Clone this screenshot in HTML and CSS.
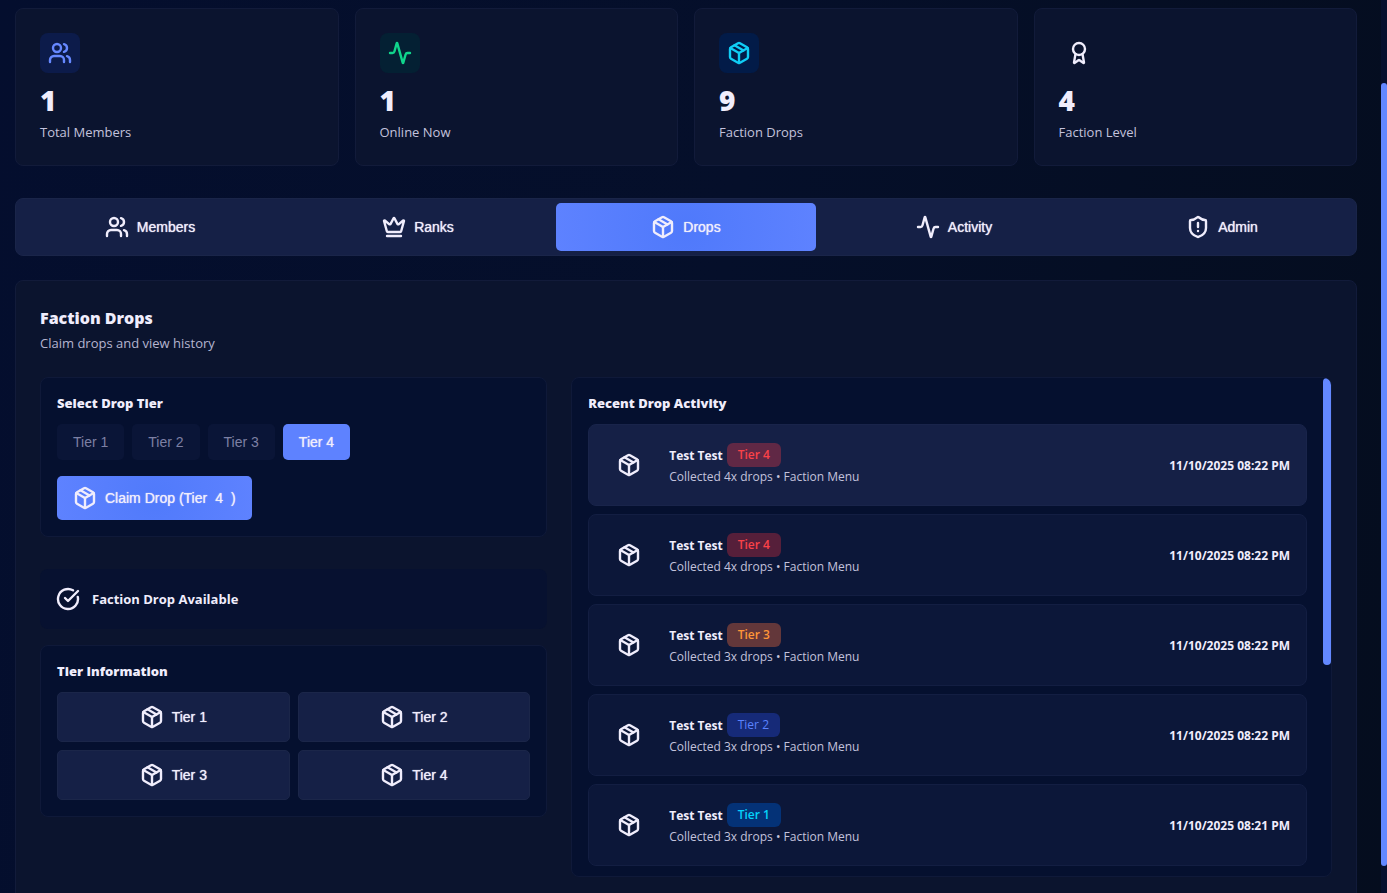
FILE: index.html
```
<!DOCTYPE html>
<html lang="en">
<head>
    <meta charset="UTF-8">
    <meta name="viewport" content="width=device-width, initial-scale=1.0">
    <title>Faction Menu</title>
    <link rel="stylesheet" href="styles.css">
</head>
<body>

<svg class="sprite" aria-hidden="true">
    <symbol id="users" viewBox="0 0 24 24">
        <path d="M16 21v-2a4 4 0 0 0-4-4H6a4 4 0 0 0-4 4v2"/>
        <circle cx="9" cy="7" r="4"/>
        <path d="M22 21v-2a4 4 0 0 0-3-3.87"/>
        <path d="M16 3.13a4 4 0 0 1 0 7.75"/>
    </symbol>
    <symbol id="activity" viewBox="0 0 24 24">
        <path d="M22 12h-2.48a2 2 0 0 0-1.93 1.46l-2.35 8.36a.25.25 0 0 1-.48 0L9.24 2.18a.25.25 0 0 0-.48 0l-2.35 8.36A2 2 0 0 1 4.49 12H2"/>
    </symbol>
    <symbol id="package" viewBox="0 0 24 24">
        <path d="M11 21.73a2 2 0 0 0 2 0l7-4A2 2 0 0 0 21 16V8a2 2 0 0 0-1-1.73l-7-4a2 2 0 0 0-2 0l-7 4A2 2 0 0 0 3 8v8a2 2 0 0 0 1 1.73z"/>
        <path d="M12 22V12"/>
        <path d="M3.3 7l8.7 5 8.7-5"/>
        <path d="M7.5 4.27l9 5.15"/>
    </symbol>
    <symbol id="award" viewBox="0 0 24 24">
        <path d="m15.477 12.89 1.515 8.526a.5.5 0 0 1-.81.47l-3.58-2.687a1 1 0 0 0-1.197 0l-3.586 2.686a.5.5 0 0 1-.81-.469l1.514-8.526"/>
        <circle cx="12" cy="8" r="6"/>
    </symbol>
    <symbol id="crown" viewBox="0 0 24 24">
        <path d="M11.562 3.266a.5.5 0 0 1 .876 0L15.39 8.87a1 1 0 0 0 1.516.294L21.183 5.5a.5.5 0 0 1 .798.519l-2.834 10.246a1 1 0 0 1-.956.734H5.81a1 1 0 0 1-.957-.734L2.02 6.02a.5.5 0 0 1 .798-.519l4.276 3.664a1 1 0 0 0 1.516-.294z"/>
        <path d="M5 21h14"/>
    </symbol>
    <symbol id="shield" viewBox="0 0 24 24">
        <path d="M20 13c0 5-3.5 7.5-7.66 8.95a1 1 0 0 1-.67-.01C7.5 20.5 4 18 4 13V6a1 1 0 0 1 1-1c2 0 4.5-1.2 6.24-2.72a1.17 1.17 0 0 1 1.52 0C14.51 3.81 17 5 19 5a1 1 0 0 1 1 1z"/>
        <path d="M12 8v4"/>
        <path d="M12 16h.01"/>
    </symbol>
    <symbol id="check" viewBox="0 0 24 24">
        <path d="M21.801 10A10 10 0 1 1 17 3.335"/>
        <path d="m9 11 3 3L22 4"/>
    </symbol>
</svg>

<main class="page">
    <section class="stats">
        <div class="stat">
            <div class="stat-icon blue"><svg class="icon"><use href="#users"/></svg></div>
            <div class="stat-value">1</div>
            <div class="stat-label">Total Members</div>
        </div>
        <div class="stat">
            <div class="stat-icon green"><svg class="icon"><use href="#activity"/></svg></div>
            <div class="stat-value">1</div>
            <div class="stat-label">Online Now</div>
        </div>
        <div class="stat">
            <div class="stat-icon cyan"><svg class="icon"><use href="#package"/></svg></div>
            <div class="stat-value">9</div>
            <div class="stat-label">Faction Drops</div>
        </div>
        <div class="stat">
            <div class="stat-icon"><svg class="icon"><use href="#award"/></svg></div>
            <div class="stat-value">4</div>
            <div class="stat-label">Faction Level</div>
        </div>
    </section>

    <nav class="tabs">
        <button class="tab"><svg class="icon"><use href="#users"/></svg>Members</button>
        <button class="tab"><svg class="icon"><use href="#crown"/></svg>Ranks</button>
        <button class="tab active"><svg class="icon"><use href="#package"/></svg>Drops</button>
        <button class="tab"><svg class="icon"><use href="#activity"/></svg>Activity</button>
        <button class="tab"><svg class="icon"><use href="#shield"/></svg>Admin</button>
    </nav>

    <section class="panel">
        <h2>Faction Drops</h2>
        <p class="subtitle">Claim drops and view history</p>

        <div class="columns">
            <div class="left">
                <div class="card select-card">
                    <h3>Select Drop Tier</h3>
                    <div class="tier-buttons">
                        <button class="tier-button">Tier 1</button>
                        <button class="tier-button">Tier 2</button>
                        <button class="tier-button">Tier 3</button>
                        <button class="tier-button selected">Tier 4</button>
                    </div>
                    <button class="claim-button"><svg class="icon"><use href="#package"/></svg><span>Claim Drop (Tier</span><span>4</span><span>)</span></button>
                </div>

                <div class="status">
                    <svg class="icon"><use href="#check"/></svg>
                    <strong>Faction Drop Available</strong>
                </div>

                <div class="card">
                    <h3>Tier Information</h3>
                    <div class="tier-grid">
                        <button class="tier-info"><svg class="icon"><use href="#package"/></svg>Tier 1</button>
                        <button class="tier-info"><svg class="icon"><use href="#package"/></svg>Tier 2</button>
                        <button class="tier-info"><svg class="icon"><use href="#package"/></svg>Tier 3</button>
                        <button class="tier-info"><svg class="icon"><use href="#package"/></svg>Tier 4</button>
                    </div>
                </div>
            </div>

            <div class="card history">
                <div class="history-content">
                    <h3>Recent Drop Activity</h3>
                    <ul class="drops">
                        <li class="drop hovered">
                            <svg class="icon"><use href="#package"/></svg>
                            <div class="drop-text">
                                <div class="drop-name">Test Test <span class="badge tier4">Tier 4</span></div>
                                <div class="drop-info">Collected 4x drops • Faction Menu</div>
                            </div>
                            <time>11/10/2025 08:22 PM</time>
                        </li>
                        <li class="drop">
                            <svg class="icon"><use href="#package"/></svg>
                            <div class="drop-text">
                                <div class="drop-name">Test Test <span class="badge tier4">Tier 4</span></div>
                                <div class="drop-info">Collected 4x drops • Faction Menu</div>
                            </div>
                            <time>11/10/2025 08:22 PM</time>
                        </li>
                        <li class="drop">
                            <svg class="icon"><use href="#package"/></svg>
                            <div class="drop-text">
                                <div class="drop-name">Test Test <span class="badge tier3">Tier 3</span></div>
                                <div class="drop-info">Collected 3x drops • Faction Menu</div>
                            </div>
                            <time>11/10/2025 08:22 PM</time>
                        </li>
                        <li class="drop">
                            <svg class="icon"><use href="#package"/></svg>
                            <div class="drop-text">
                                <div class="drop-name">Test Test <span class="badge tier2">Tier 2</span></div>
                                <div class="drop-info">Collected 3x drops • Faction Menu</div>
                            </div>
                            <time>11/10/2025 08:22 PM</time>
                        </li>
                        <li class="drop">
                            <svg class="icon"><use href="#package"/></svg>
                            <div class="drop-text">
                                <div class="drop-name">Test Test <span class="badge tier1">Tier 1</span></div>
                                <div class="drop-info">Collected 3x drops • Faction Menu</div>
                            </div>
                            <time>11/10/2025 08:21 PM</time>
                        </li>
                    </ul>
                </div>
                <div class="history-scroll"><div class="thumb"></div></div>
            </div>
        </div>
    </section>
</main>

<div class="page-scroll"><div class="thumb"></div></div>

</body>
</html>
```
FILE: styles.css
```
* {
    box-sizing: border-box;
}

body {
    font-family: 'Segoe UI', 'Open Sans', sans-serif;
    font-size: 13px;
    margin: 0;
    height: 100vh;
    overflow: hidden;
    display: flex;
    color: #f0edfc;
    background: linear-gradient(100deg, #040e2e 0%, #050f2a 50%, #050d1e 100%);
}

h2, h3, p, ul {
    margin: 0;
    padding: 0;
}

button {
    font-family: 'Liberation Sans', Arial, sans-serif;
    font-size: 14px;
    color: #f0edfc;
    text-shadow: 0 0 1px currentColor;
    border: none;
    padding: 0;
    cursor: pointer;
}

.sprite {
    display: none;
}

.icon {
    width: 24px;
    height: 24px;
    flex-shrink: 0;
    fill: none;
    stroke: currentColor;
    stroke-width: 2.4;
    stroke-linecap: round;
    stroke-linejoin: round;
}

.page {
    flex: 1;
    min-width: 0;
    padding: 8px 24px 24px 15px;
}

/* Stat cards */
.stats {
    display: grid;
    grid-template-columns: repeat(4, 1fr);
    gap: 16px;
    margin-bottom: 32px;
}

.stat {
    background-color: #0b142f;
    border: 1px solid #121b3a;
    border-radius: 8px;
    padding: 24px;
}

.stat-icon {
    width: 40px;
    height: 40px;
    padding: 8px;
    border-radius: 8px;
}

.stat-icon.blue {
    color: #6688ff;
    background-color: #0c1b4a;
}

.stat-icon.green {
    color: #10d58c;
    background-color: #042033;
}

.stat-icon.cyan {
    color: #10cdf5;
    background-color: #021b48;
}

.stat-value {
    font-size: 28px;
    font-weight: 800;
    line-height: 30px;
    margin: 12px 0 8px;
}

.stat-label {
    line-height: 18px;
    color: #c3c2dc;
}

/* Tabs */
.tabs {
    display: grid;
    grid-template-columns: repeat(5, 1fr);
    gap: 8px;
    padding: 4px;
    background-color: #152046;
    border: 1px solid #1a2549;
    border-radius: 8px;
    margin-bottom: 24px;
}

.tab {
    display: flex;
    align-items: center;
    justify-content: center;
    gap: 8px;
    height: 48px;
    background: transparent;
    border-radius: 5px;
}

.tab.active {
    background: radial-gradient(circle, #4f79fb, #5e82ff);
}

/* Drops panel */
.panel {
    background-color: #0b142e;
    border: 1px solid #121b3a;
    border-radius: 8px;
    padding: 24px;
}

.panel h2 {
    font-size: 16px;
    font-weight: 800;
    line-height: 26px;
}

.subtitle {
    line-height: 20px;
    margin: 2px 0 24px;
    color: #b5b5d0;
}

.columns {
    display: grid;
    grid-template-columns: 2fr 3fr;
    gap: 24px;
    align-items: start;
}

.card {
    background-color: #05102f;
    border: 1px solid #0f1939;
    border-radius: 8px;
    padding: 16px;
}

.card h3 {
    font-size: 13px;
    font-weight: 800;
    line-height: 18px;
    margin-bottom: 12px;
}

.select-card {
    margin-bottom: 32px;
}

.tier-buttons {
    display: flex;
    gap: 8px;
    margin-bottom: 16px;
}

.tier-button {
    height: 36px;
    padding: 0 16px;
    border-radius: 5px;
    background-color: #0a1537;
    color: #7d80a4;
    text-shadow: none;
}

.tier-button.selected {
    background-color: #5e82ff;
    color: #f0edfc;
    text-shadow: 0 0 1px currentColor;
}

.claim-button {
    display: flex;
    align-items: center;
    gap: 8px;
    height: 44px;
    padding: 0 16px;
    border-radius: 5px;
    background: radial-gradient(circle, #507afb, #5e82ff);
}

.status {
    display: flex;
    align-items: center;
    gap: 12px;
    height: 60px;
    padding: 0 16px;
    margin-bottom: 16px;
    background-color: #071130;
    border-radius: 8px;
}

.tier-grid {
    display: grid;
    grid-template-columns: 1fr 1fr;
    gap: 8px;
}

.tier-info {
    display: flex;
    align-items: center;
    justify-content: center;
    gap: 8px;
    height: 50px;
    background-color: #152046;
    border: 1px solid #1b2649;
    border-radius: 5px;
}

/* Recent activity */
.history {
    display: flex;
    height: 500px;
    padding: 0;
    overflow: hidden;
}

.history-content {
    flex: 1;
    padding: 16px;
}

.drops {
    list-style: none;
    display: flex;
    flex-direction: column;
    gap: 8px;
}

.drop {
    display: flex;
    align-items: center;
    padding: 18px 16px;
    font-size: 12px;
    background-color: #0c1739;
    border: 1px solid #131e42;
    border-radius: 8px;
}

.drop.hovered {
    background-color: #152046;
    border-color: #19244a;
}

.drop .icon {
    margin: 0 28px 0 12px;
}

.drop-text {
    flex: 1;
}

.drop-name {
    display: flex;
    align-items: center;
    gap: 4px;
    height: 24px;
    font-weight: 700;
}

.drop-info {
    line-height: 20px;
    color: #c3c2dc;
}

.drop time {
    font-weight: 700;
}

.badge {
    line-height: 24px;
    padding: 0 11px;
    border-radius: 6px;
    font-weight: 600;
}

.tier4 {
    color: #fb4248;
    background-color: #561f3a;
}

.hovered .tier4 {
    background-color: #602845;
}

.tier3 {
    color: #ff9638;
    background-color: #63373a;
}

.tier2 {
    color: #5b82ff;
    background-color: #162a78;
    font-weight: 400;
}

.tier1 {
    color: #04d2fb;
    background-color: #043277;
}

/* Scrollbars */
.thumb {
    height: 100%;
    background-color: #6388ff;
    border-radius: 4px;
}

.history-scroll {
    width: 8px;
    padding-bottom: 211px;
}

.page-scroll {
    width: 6px;
    padding: 83px 0 27px;
    background-color: #07102e;
}
```
